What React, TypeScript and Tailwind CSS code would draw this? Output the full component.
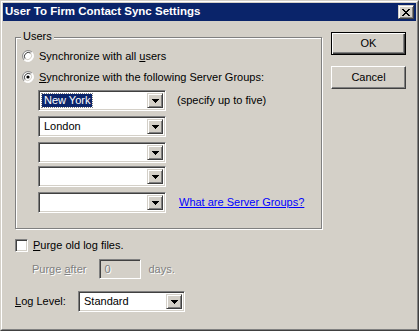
import React from 'react';

const sunken =
  'border border-t-[#808080] border-l-[#808080] border-b-white border-r-white shadow-[inset_1px_1px_0_#404040,inset_-1px_-1px_0_#d4d0c8]';
const raised =
  'border border-t-[#d4d0c8] border-l-[#d4d0c8] border-b-[#404040] border-r-[#404040] shadow-[inset_1px_1px_0_#fff,inset_-1px_-1px_0_#808080]';

function Arrow() {
  return (
    <svg width="7" height="4" viewBox="0 0 7 4" shapeRendering="crispEdges">
      <path d="M0 0h7v1H0zM1 1h5v1H1zM2 2h3v1H2zM3 3h1v1H3z" fill="#000" />
    </svg>
  );
}

function Combo({ width, value, selected }: { width: string; value?: string; selected?: boolean }) {
  return (
    <div className={`flex h-[21px] ${width} bg-white ${sunken} p-[2px]`}>
      <div className="flex flex-1 items-center pl-[1px]">
        {value && selected ? (
          <span className="outline-dotted outline-1 outline-[#808080] bg-[#0a246a] px-[2px] leading-[13px] text-white">
            {value}
          </span>
        ) : (
          <span className="pl-[2px]">{value}</span>
        )}
      </div>
      <div className={`flex w-[16px] items-center justify-center bg-[#d4d0c8] ${raised}`}>
        <Arrow />
      </div>
    </div>
  );
}

function Radio({ checked }: { checked?: boolean }) {
  return (
    <svg width="12" height="12" viewBox="0 0 12 12" className="shrink-0">
      <circle cx="6" cy="6" r="5.5" fill="#fff" />
      <path d="M10 2.2A5.5 5.5 0 0 0 2.2 10" stroke="#808080" strokeWidth="1" fill="none" />
      <path d="M8.8 3.2A4 4 0 0 0 3.2 8.8" stroke="#404040" strokeWidth="1" fill="none" />
      <path d="M2 9.8A5.5 5.5 0 0 0 9.8 2" stroke="#fff" strokeWidth="1" fill="none" />
      <path d="M3.2 8.8A4 4 0 0 0 8.8 3.2" stroke="#d4d0c8" strokeWidth="1" fill="none" />
      {checked && <circle cx="6" cy="6" r="1.6" fill="#000" />}
    </svg>
  );
}

export default function App() {
  return (
    <div className="h-[331px] w-[419px] border border-t-[#d4d0c8] border-l-[#d4d0c8] border-b-[#404040] border-r-[#404040] bg-[#d4d0c8] font-['Liberation_Sans',sans-serif] text-[11px] text-black">
      <div className="flex h-full flex-col border border-t-white border-l-white border-b-[#808080] border-r-[#808080] p-[1px]">
        {/* title bar */}
        <div className="flex h-[18px] items-center justify-between bg-[#0a246a] pl-[2px] pr-[2px]">
          <span className="text-[11.5px] font-bold text-white">User To Firm Contact Sync Settings</span>
          <div className={`flex h-[14px] w-[16px] items-center justify-center bg-[#d4d0c8] ${raised}`}>
            <svg width="8" height="7" viewBox="0 0 8 7" shapeRendering="crispEdges">
              <path d="M0 0h2v1H0zM6 0h2v1H6zM1 1h2v1H1zM5 1h2v1H5zM2 2h4v1H2zM3 3h2v1H3zM2 4h4v1H2zM1 5h2v1H1zM5 5h2v1H5zM0 6h2v1H0zM6 6h2v1H6z" fill="#000" />
            </svg>
          </div>
        </div>

        {/* body */}
        <div className="flex flex-1 pl-[12px]">
          <div className="flex flex-col pt-[16px]">
            <div className="relative h-[192px] w-[307px] border border-[#808080] shadow-[1px_1px_0_#fff,inset_1px_1px_0_#fff]">
              <span className="absolute left-[5px] top-[-8px] bg-[#d4d0c8] px-[2px] leading-[13px]">Users</span>
              <div className="flex flex-col pl-[6px] pt-[11px]">
                <div className="flex h-[14px] items-center gap-[5px]">
                  <Radio />
                  <span>
                    Synchronize with all <span className="underline">u</span>sers
                  </span>
                </div>
                <div className="mt-[7px] flex h-[14px] items-center gap-[5px]">
                  <Radio checked />
                  <span>
                    <span className="underline">S</span>ynchronize with the following Server Groups:
                  </span>
                </div>
                <div className="ml-[16px] mt-[6px] flex flex-col">
                  <div className="flex items-center gap-[11px]">
                    <Combo width="w-[128px]" value="New York" selected />
                    <span>(specify up to five)</span>
                  </div>
                  <div className="mt-[5px]">
                    <Combo width="w-[128px]" value="London" />
                  </div>
                  <div className="mt-[5px]">
                    <Combo width="w-[128px]" />
                  </div>
                  <div className="mt-[3px]">
                    <Combo width="w-[128px]" />
                  </div>
                  <div className="mt-[5px] flex items-center gap-[13px]">
                    <Combo width="w-[128px]" />
                    <span className="text-[#0000ff] underline">What are Server Groups?</span>
                  </div>
                </div>
              </div>
            </div>

            <div className="mt-[10px] flex h-[13px] items-center gap-[5px]">
              <div className={`h-[13px] w-[13px] bg-white ${sunken}`} />
              <span>
                <span className="underline">P</span>urge old log files.
              </span>
            </div>

            <div className="ml-[17px] mt-[7px] flex items-center text-[#808080] [text-shadow:1px_1px_0_#fff]">
              <span>
                Purge <span className="underline">a</span>fter
              </span>
              <div className={`ml-[13px] flex h-[20px] w-[42px] items-center bg-[#d4d0c8] pl-[4px] ${sunken}`}>0</div>
              <span className="ml-[7px]">days.</span>
            </div>

            <div className="mt-[12px] flex items-center">
              <span className="w-[63px]">
                <span className="underline">L</span>og Level:
              </span>
              <Combo width="w-[107px]" value="Standard" />
            </div>
          </div>

          {/* buttons */}
          <div className="ml-[9px] flex flex-col pt-[11px]">
            <button className="h-[23px] w-[75px] border border-black bg-[#d4d0c8] shadow-[inset_1px_1px_0_#fff,inset_-1px_-1px_0_#404040,inset_-2px_-2px_0_#808080]">
              OK
            </button>
            <button className={`mt-[11px] h-[23px] w-[75px] bg-[#d4d0c8] border border-t-white border-l-white border-b-[#404040] border-r-[#404040] shadow-[inset_-1px_-1px_0_#808080]`}>
              Cancel
            </button>
          </div>
        </div>
      </div>
    </div>
  );
}
